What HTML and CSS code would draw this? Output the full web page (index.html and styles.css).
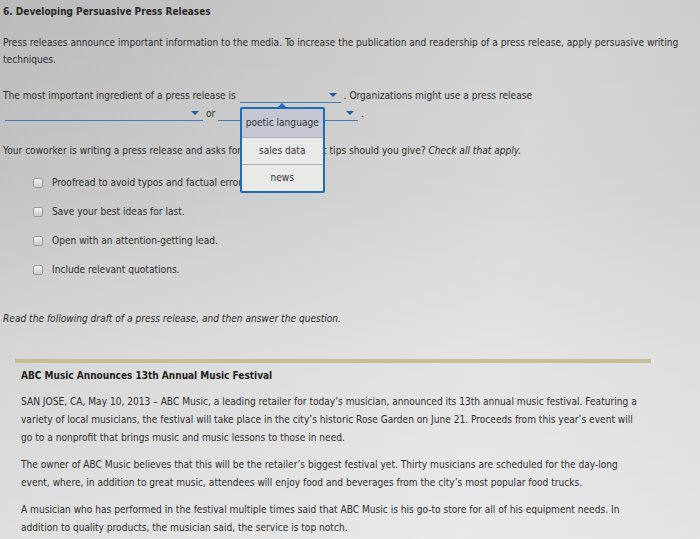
FILE: index.html
```html
<!DOCTYPE html>
<html>
<head>
<meta charset="utf-8">
<link rel="stylesheet" href="styles.css">
</head>
<body>
<div class="page">
  <h1 class="title">6. Developing Persuasive Press Releases</h1>
  <p class="intro">Press releases announce important information to the media. To increase the publication and readership of a press release, apply persuasive writing techniques.</p>

  <div class="q1">
    <div class="line">The most important ingredient of a press release is <span class="sel sel-a"><span class="arrow"></span>
        <span class="menu">
          <span class="item active">poetic language</span>
          <span class="item">sales data</span>
          <span class="item">news</span>
        </span>
      </span> . Organizations might use a press release</div>
    <div class="line"><span class="sel sel-b"><span class="arrow"></span></span> or <span class="sel sel-c"><span class="arrow"></span></span> .</div>
  </div>

  <p class="q2">Your coworker is writing a press release and asks for your advice. What tips should you give? <em>Check all that apply.</em></p>

  <ul class="checks">
    <li><span class="box"></span>Proofread to avoid typos and factual errors.</li>
    <li><span class="box"></span>Save your best ideas for last.</li>
    <li><span class="box"></span>Open with an attention-getting lead.</li>
    <li><span class="box"></span>Include relevant quotations.</li>
  </ul>

  <p class="read"><em>Read the following draft of a press release, and then answer the question.</em></p>

  <div class="draft">
    <div class="rule"></div>
    <h2 class="headline">ABC Music Announces 13th Annual Music Festival</h2>
    <p>SAN JOSE, CA, May 10, 2013 – ABC Music, a leading retailer for today’s musician, announced its 13th annual music festival. Featuring a variety of local musicians, the festival will take place in the city’s historic Rose Garden on June 21. Proceeds from this year’s event will go to a nonprofit that brings music and music lessons to those in need.</p>
    <p>The owner of ABC Music believes that this will be the retailer’s biggest festival yet. Thirty musicians are scheduled for the day-long event, where, in addition to great music, attendees will enjoy food and beverages from the city’s most popular food trucks.</p>
    <p>A musician who has performed in the festival multiple times said that ABC Music is his go-to store for all of his equipment needs. In addition to quality products, the musician said, the service is top notch.</p>
  </div>
</div>
</body>
</html>
```

FILE: styles.css
```css
html, body {
  margin: 0;
  padding: 0;
}
body {
  width: 700px;
  height: 539px;
  overflow: hidden;
  background: linear-gradient(100deg, #bababa 0%, #cacaca 45%, #d3d3d3 70%, #c8c8c8 100%);
  font-family: "DejaVu Sans Condensed", "DejaVu Sans", sans-serif;
  font-size: 10.1px;
  color: #2e2e2e;
}
.page {
  position: relative;
  padding: 0 0 0 3px;
  min-height: 539px;
  background: linear-gradient(to bottom, rgba(255,255,255,0) 0%, rgba(255,255,255,0.12) 35%, rgba(255,255,255,0.38) 65%, rgba(255,255,255,0.5) 100%);
}
.title {
  margin: 0;
  padding-top: 5px;
  font-size: 10px;
  font-weight: bold;
  line-height: 14px;
  color: #2a2a2a;
}
.intro {
  margin: 15px 0 0 0;
  line-height: 17px;
  padding-right: 12px;
}
.q1 {
  margin-top: 19px;
  line-height: 18px;
}
.line {
  white-space: nowrap;
}
.sel {
  display: inline-block;
  position: relative;
  height: 13px;
  vertical-align: -4px;
  border-bottom: 1px solid #3f7cb8;
}
.sel-a { width: 101px; margin-left: 1px; }
.sel-b { width: 198px; margin-left: 2px; }
.sel-c { width: 140px; }
.arrow {
  position: absolute;
  right: 4px;
  top: 4px;
  width: 0;
  height: 0;
  border-left: 4px solid transparent;
  border-right: 4px solid transparent;
  border-top: 4px solid #1f5f9e;
}
.menu {
  position: absolute;
  left: 0;
  top: 18px;
  width: 81px;
  z-index: 5;
  border: 2px solid #1d6cb4;
  border-radius: 2px;
  background: #e9e9e7;
  display: flex;
  flex-direction: column;
  line-height: 26px;
}
.menu::before {
  content: "";
  position: absolute;
  left: 35px;
  top: -6px;
  border-left: 5px solid transparent;
  border-right: 5px solid transparent;
  border-bottom: 5px solid #1d6cb4;
}
.item {
  display: block;
  height: 26px;
  text-align: center;
  border-top: 1px solid #a9acb2;
  color: #333333;
}
.item:first-child { border-top: 0; height: 28px; line-height: 28px; }
.item.active {
  background: #c4c7d2;
}
.q2 {
  margin: 19px 0 0 0;
  line-height: 18px;
}
.checks {
  list-style: none;
  margin: 14px 0 0 0;
  padding: 0 0 0 30px;
}
.checks li {
  height: 29px;
  line-height: 18px;
  display: flex;
  align-items: flex-start;
  gap: 9px;
}
.box {
  width: 8px;
  height: 8px;
  margin-top: 4px;
  border: 1px solid #9a9a9a;
  border-radius: 2px;
  background: linear-gradient(#f4f4f4, #c9c9c9);
}
.read {
  margin: 20px 0 0 0;
  line-height: 18px;
}
.draft {
  margin: 0 49px 0 12px;
  padding-top: 31px;
}
.rule {
  height: 4px;
  background: #c7be98;
}
.headline {
  margin: 4px 0 0 6px;
  font-size: 10px;
  font-weight: bold;
  line-height: 18px;
  color: #1e1e1e;
}
.draft p {
  margin: 8px 8px 0 6px;
  line-height: 18px;
}
.draft p + p {
  margin-top: 9px;
}
```
